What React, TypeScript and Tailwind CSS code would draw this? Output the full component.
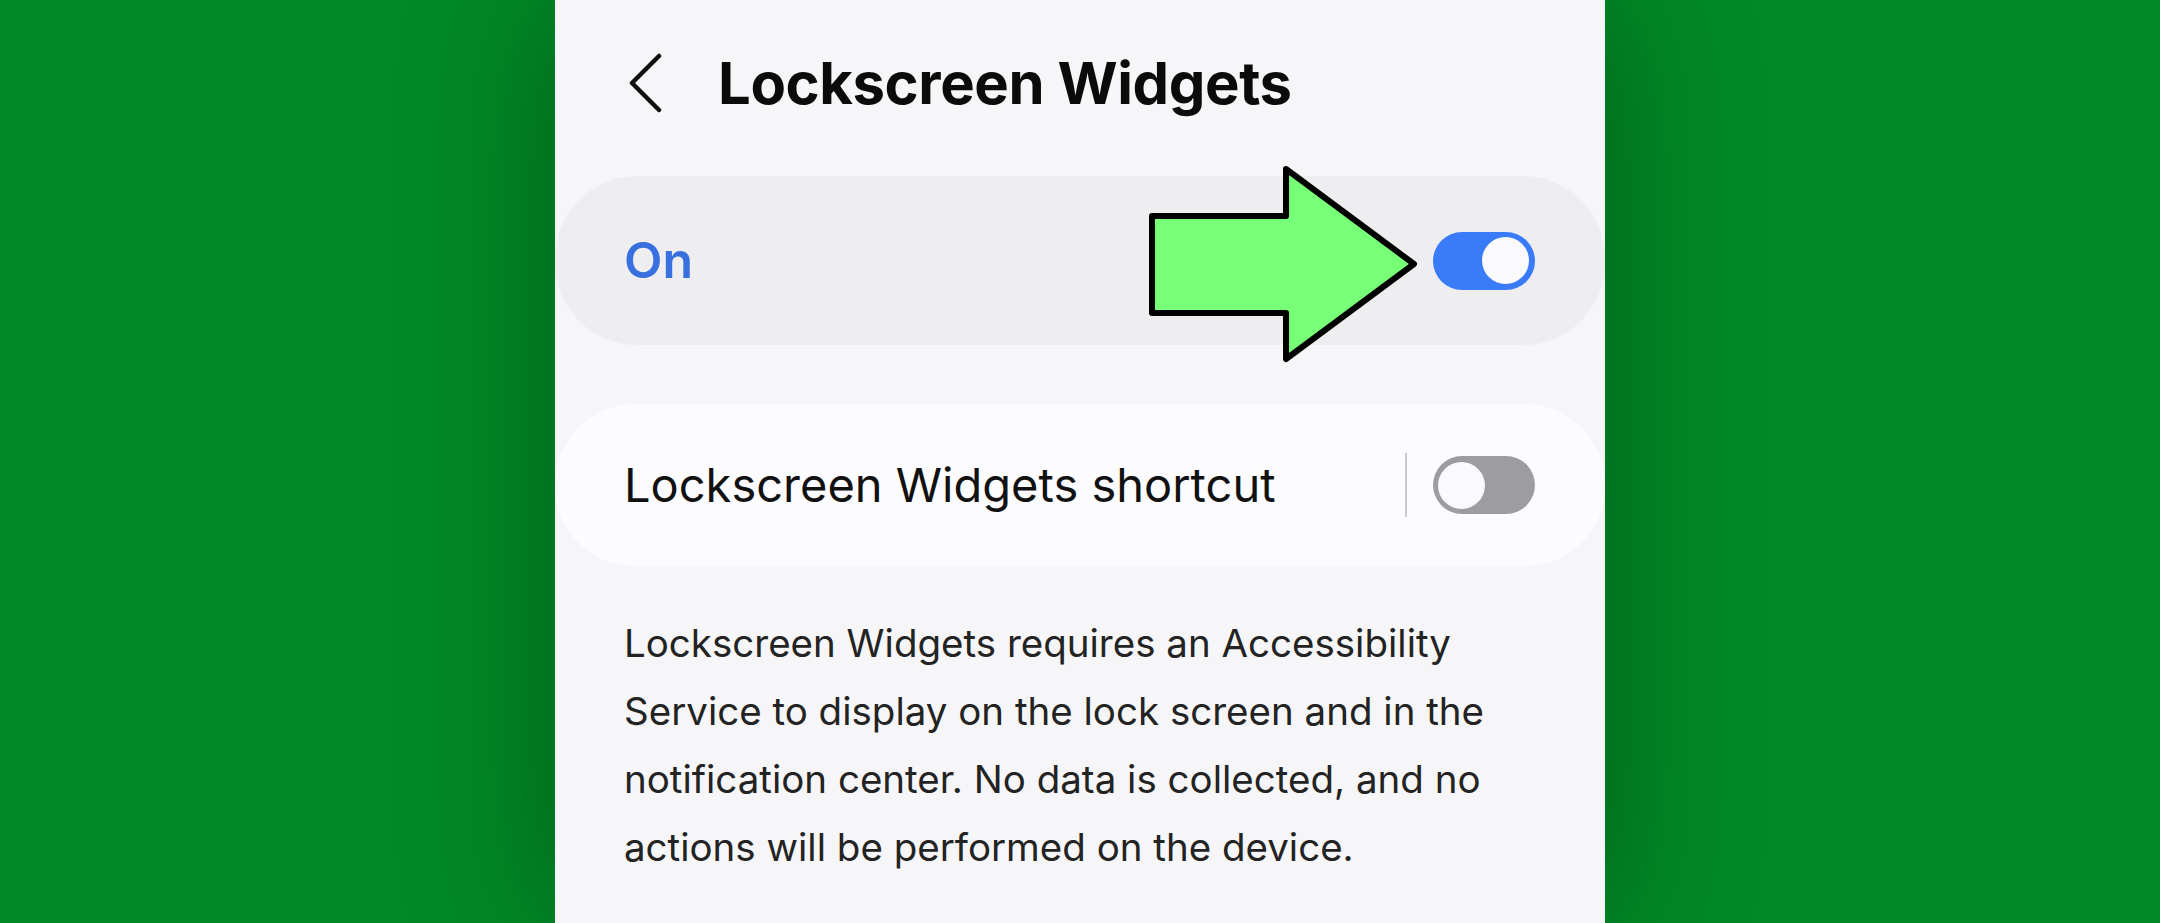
import React from 'react';

const descriptionLines = [
    'Lockscreen Widgets requires an Accessibility',
    'Service to display on the lock screen and in the',
    'notification center. No data is collected, and no',
    'actions will be performed on the device.',
];

const Toggle: React.FC<{ on: boolean }> = ({ on }) => (
    <div
        className={
            on
                ? 'flex h-[58px] w-[102px] shrink-0 items-center justify-end rounded-full bg-[#3a7bfa] px-[6px]'
                : 'flex h-[58px] w-[102px] shrink-0 items-center justify-start rounded-full bg-[#9c9ca1] px-[5px]'
        }
    >
        <div className="h-[47px] w-[47px] rounded-full bg-[#fafafd]" />
    </div>
);

const App: React.FC = () => {
    return (
        <div className="flex h-[923px] w-full justify-center overflow-hidden bg-[#008a25] font-['Inter',sans-serif]">
            <div className="flex h-[923px] w-[1050px] flex-col bg-[#f6f6f8] shadow-[0_0_140px_rgba(0,0,0,0.32)]">
                {/* header */}
                <div className="flex h-[166px] items-center pl-[72px]">
                    <svg width="36" height="60" viewBox="0 0 36 60" className="shrink-0">
                        <polyline
                            points="32,3 5,30 32,57"
                            fill="none"
                            stroke="#111"
                            strokeWidth="4.5"
                            strokeLinecap="round"
                            strokeLinejoin="round"
                        />
                    </svg>
                    <h1 className="ml-[55px] text-[58px] font-bold tracking-[-0.4px] text-[#0b0b0b]">Lockscreen Widgets</h1>
                </div>

                {/* master switch */}
                <div className="relative mt-[10px] flex h-[169px] items-center justify-between rounded-[82px] bg-[#eeeef0] pl-[69px] pr-[70px]">
                    <span className="text-[50px] font-semibold text-[#3870e0]">On</span>
                    <Toggle on />
                    <svg
                        width="275"
                        height="202"
                        viewBox="0 0 275 202"
                        className="absolute left-[591px] top-[-13px]"
                    >
                        <polygon
                            points="6,53 140,53 140,6 268,101 140,196 140,150 6,150"
                            fill="#77ff77"
                            stroke="#000"
                            strokeWidth="6"
                            strokeLinejoin="round"
                        />
                    </svg>
                </div>

                {/* shortcut row */}
                <div className="mt-[59px] flex h-[162px] items-center justify-between rounded-[80px] bg-[#fcfcfe] pl-[69px] pr-[70px]">
                    <span className="text-[47px] text-[#111]">Lockscreen Widgets shortcut</span>
                    <div className="flex items-center gap-[26px]">
                        <div className="h-[64px] w-[2px] bg-[#cbcbcf]" />
                        <Toggle on={false} />
                    </div>
                </div>

                {/* description */}
                <div className="mt-[43px] pl-[69px] pr-[60px] text-[38.5px] leading-[68px] text-[#232323]">
                    {descriptionLines.map((line) => (
                        <div key={line} className="whitespace-nowrap">
                            {line}
                        </div>
                    ))}
                </div>
            </div>
        </div>
    );
};

export default App;
